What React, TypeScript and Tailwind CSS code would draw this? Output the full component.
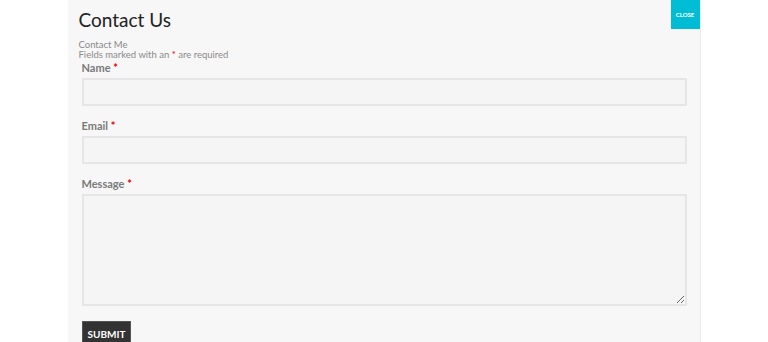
import React from 'react';

const Req = () => <span className="text-[#e00000]">*</span>;

const Field = ({ label, children }: { label: string; children: React.ReactNode }) => (
  <div className="mb-[13px]">
    <label className="block text-[11px] font-bold text-[#7a7a7a] leading-[14px] mb-[3px]">
      {label} <Req />
    </label>
    {children}
  </div>
);

const App = () => {
  return (
    <div className="w-[768px] h-[342px] bg-white overflow-hidden" style={{ fontFamily: 'Lato, "Noto Sans", sans-serif' }}>
      <div className="relative mx-auto w-[633px] h-full bg-[#f7f7f7] border-r border-[#ececec] pl-[11px] pr-[13px]">
        <button className="absolute right-0 top-0 w-[29px] h-[29px] bg-[#00bcd4] text-white text-[6px] font-bold">
          CLOSE
        </button>
        <h1 className="pt-[8px] text-[19px] leading-[24px] text-[#222]">Contact Us</h1>
        <div className="mt-[8px] text-[9.5px] leading-[10px] text-[#8a8a8a]">
          <p>Contact Me</p>
          <p>
            Fields marked with an <Req /> are required
          </p>
        </div>
        <form className="pl-[3px] mt-[1px]">
          <Field label="Name">
            <input className="block w-full h-[28px] bg-[#f5f5f5] border-2 border-[#e6e6e6] outline-none" />
          </Field>
          <Field label="Email">
            <input className="block w-full h-[28px] bg-[#f5f5f5] border-2 border-[#e6e6e6] outline-none" />
          </Field>
          <Field label="Message">
            <textarea className="block w-full h-[112px] bg-[#f5f5f5] border-2 border-[#e6e6e6] outline-none" />
          </Field>
          <button
            type="button"
            className="mt-[2px] h-[26px] px-[5px] bg-[#333] border border-[#555] text-white text-[10px] font-bold"
          >
            SUBMIT
          </button>
        </form>
      </div>
    </div>
  );
};

export default App;
